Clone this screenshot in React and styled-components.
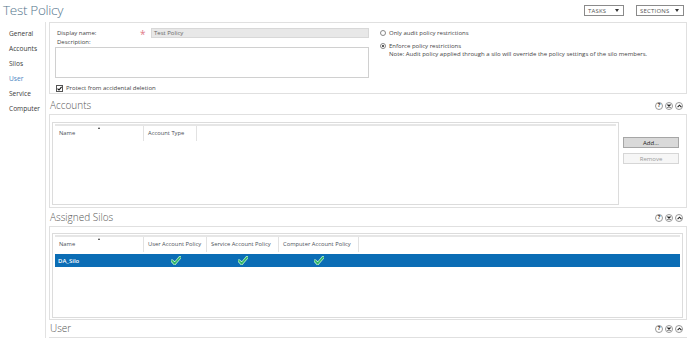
import React from "react";
import styled, { createGlobalStyle } from "styled-components";

const Global = createGlobalStyle`
  html, body { margin: 0; padding: 0; background: #fff; }
  body { font-family: "Open Sans", "Noto Sans", sans-serif; color: #444; }
`;

const Page = styled.div`
  width: 690px;
  height: 338px;
  overflow: hidden;
  display: flex;
  flex-direction: column;
  background: #fff;
`;

const TopBar = styled.div`
  height: 22px;
  display: flex;
  align-items: center;
  justify-content: space-between;
  padding: 0 6px 0 3px;
  box-sizing: border-box;
`;

const Title = styled.div`
  font-family: "Open Sans", "Noto Sans", sans-serif;
  font-weight: 300;
  font-size: 13.5px;
  color: #55768d;
  letter-spacing: -0.3px;
  line-height: 18px;
  margin-top: -2px;
`;

const Actions = styled.div`
  display: flex;
  gap: 12px;
  align-self: flex-start;
  margin-top: 5px;
`;

const DropButton = styled.div`
  width: ${(p) => p.$w}px;
  height: 11px;
  box-sizing: border-box;
  border: 1px solid #8a8a8a;
  background: #fff;
  display: flex;
  align-items: center;
  justify-content: space-between;
  padding: 0 4px 0 3px;
  font-size: 6px;
  color: #555;
  letter-spacing: 0.2px;
`;

const Tri = styled.span`
  width: 0;
  height: 0;
  border-left: 2.5px solid transparent;
  border-right: 2.5px solid transparent;
  border-top: 3px solid #333;
`;

const Body = styled.div`
  flex: 1;
  display: flex;
  gap: 3px;
  min-height: 0;
`;

const Nav = styled.div`
  width: 46px;
  border-right: 1px solid #e2e2e2;
  padding: 4px 0 0 9px;
  box-sizing: border-box;
  display: flex;
  flex-direction: column;
`;

const NavItem = styled.div`
  height: 15px;
  line-height: 15px;
  font-size: 6.6px;
  color: ${(p) => (p.$active ? "#4a86bf" : "#3a3a3a")};
`;

const Main = styled.div`
  width: 638px;
  display: flex;
  flex-direction: column;
`;

const GeneralPanel = styled.div`
  height: 74px;
  box-sizing: border-box;
  border: 1px solid #e0e0e0;
  display: flex;
  padding: 4px 6px 0 5px;
`;

const FieldCol = styled.div`
  width: 314px;
  display: flex;
  flex-direction: column;
`;

const Label = styled.span`
  font-size: 6px;
  color: #444;
`;

const NameRow = styled.div`
  display: flex;
  align-items: center;
  height: 11px;
  padding-left: 2px;
`;

const NameLabel = styled(Label)`
  width: 83px;
`;

const Required = styled.span`
  width: 11px;
  color: #e07a88;
  font-size: 10px;
  line-height: 10px;
  margin-top: 3px;
`;

const TextInput = styled.div`
  flex: 1;
  height: 10px;
  box-sizing: border-box;
  background: #e8e8e8;
  border: 1px solid #d8d8d8;
  font-size: 6px;
  color: #666;
  line-height: 8px;
  padding-left: 2px;
`;

const DescLabel = styled(Label)`
  padding-left: 2px;
  height: 9px;
  line-height: 9px;
`;

const TextArea = styled.div`
  height: 31px;
  box-sizing: border-box;
  border: 1px solid #d0d0d0;
  background: #fff;
`;

const CheckRow = styled.div`
  display: flex;
  align-items: center;
  gap: 3px;
  margin-top: 6px;
  padding-left: 1px;
`;

const CheckBox = styled.div`
  width: 7px;
  height: 7px;
  box-sizing: border-box;
  border: 1px solid #555;
  background: #fff;
  display: flex;
  align-items: center;
  justify-content: center;
`;

const RadioCol = styled.div`
  margin-left: 11px;
  padding-top: 1px;
  display: flex;
  flex-direction: column;
`;

const RadioRow = styled.div`
  display: flex;
  align-items: center;
  gap: 3px;
  height: 9px;
  margin-bottom: ${(p) => p.$mb || 0}px;
`;

const Radio = styled.div`
  width: 6px;
  height: 6px;
  box-sizing: border-box;
  border: 1px solid #888;
  border-radius: 50%;
  background: #fff;
  display: flex;
  align-items: center;
  justify-content: center;
  &::after {
    content: "";
    display: ${(p) => (p.$on ? "block" : "none")};
    width: 2px;
    height: 2px;
    border-radius: 50%;
    background: #222;
  }
`;

const Note = styled(Label)`
  padding-left: 9px;
  line-height: 9px;
`;

const SectionHeader = styled.div`
  height: ${(p) => p.$h}px;
  display: flex;
  align-items: flex-end;
  justify-content: space-between;
  padding: 0 4px 3px 1px;
  box-sizing: border-box;
  border-bottom: 1px solid #e0e0e0;
  flex-shrink: 0;
`;

const SectionTitle = styled.div`
  font-family: "Open Sans", "Noto Sans", sans-serif;
  font-weight: 300;
  font-size: 10px;
  color: #555;
  line-height: 12px;
`;

const IconGroup = styled.div`
  display: flex;
  gap: 2px;
  margin-bottom: 1px;
`;

const RoundIcon = styled.span`
  width: 8px;
  height: 8px;
  box-sizing: border-box;
  border: 1px solid #999;
  border-radius: 50%;
  background: #fff;
  display: flex;
  align-items: center;
  justify-content: center;
  font-size: 5.5px;
  font-weight: 700;
  line-height: 1;
  color: #333;
`;

const SectionPanel = styled.div`
  height: ${(p) => p.$h}px;
  box-sizing: border-box;
  border-left: 1px solid #e0e0e0;
  border-right: 1px solid #e0e0e0;
  border-bottom: 1px solid #e0e0e0;
  display: flex;
  gap: 4px;
  padding: ${(p) => p.$pt}px 3px 0 2px;
  flex-shrink: 0;
`;

const ListBox = styled.div`
  width: ${(p) => p.$w}px;
  height: ${(p) => p.$lh}px;
  box-sizing: border-box;
  border: 1px solid #dcdcdc;
  background: #fff;
  padding: 1px 2px;
  display: flex;
  flex-direction: column;
`;

const HeaderRow = styled.div`
  height: 17px;
  display: flex;
  border-top: 2px solid #e6e6e6;
  box-sizing: border-box;
`;

const ColHead = styled.div`
  position: relative;
  width: ${(p) => p.$w}px;
  box-sizing: border-box;
  padding: 3px 0 0 4px;
  font-size: 5.8px;
  color: #4a4f58;
  border-right: ${(p) => (p.$sep ? "1px solid #e2e2e2" : "none")};
`;

const SortArrow = styled.span`
  position: absolute;
  left: 43px;
  top: 1px;
  width: 0;
  height: 0;
  border-left: 1.5px solid transparent;
  border-right: 1.5px solid transparent;
  border-bottom: 2px solid #333;
`;

const DataRow = styled.div`
  height: 13px;
  display: flex;
  align-items: center;
  background: ${(p) => (p.$sel ? "#0b6db5" : "transparent")};
  margin-top: 2px;
`;

const Cell = styled.div`
  width: ${(p) => p.$w}px;
  box-sizing: border-box;
  padding-left: ${(p) => p.$pl ?? 3}px;
  font-size: 6px;
  color: #fff;
  font-weight: 600;
  display: flex;
  justify-content: ${(p) => (p.$center ? "center" : "flex-start")};
`;

const ButtonCol = styled.div`
  display: flex;
  flex-direction: column;
  gap: 5px;
  padding-top: 15px;
`;

const PanelButton = styled.div`
  width: 56px;
  height: 11px;
  box-sizing: border-box;
  border: 1px solid ${(p) => (p.$disabled ? "#d6d6d6" : "#a6a6a6")};
  background: ${(p) => (p.$disabled ? "#f6f6f6" : "#d9d9d9")};
  color: ${(p) => (p.$disabled ? "#9a9a9a" : "#222")};
  font-size: 6px;
  display: flex;
  align-items: center;
  justify-content: center;
`;

const Check = () => (
  <svg width="10" height="9" viewBox="0 0 10 9">
    <path d="M1 4.8 L3.7 7.6 L9 1.4" fill="none" stroke="#bdf0cf" strokeWidth="3" strokeLinecap="round" strokeLinejoin="round" />
    <path d="M1 4.8 L3.7 7.6 L9 1.4" fill="none" stroke="#2fb46a" strokeWidth="1.6" strokeLinecap="round" strokeLinejoin="round" />
  </svg>
);

const Icons = () => (
  <IconGroup>
    <RoundIcon>?</RoundIcon>
    <RoundIcon>
      <svg width="4" height="4" viewBox="0 0 4 4">
        <path d="M0.5 0.5 L3.5 3.5 M3.5 0.5 L0.5 3.5" fill="none" stroke="#222" strokeWidth="1.2" />
      </svg>
    </RoundIcon>
    <RoundIcon>
      <svg width="5" height="4" viewBox="0 0 5 4">
        <path d="M0.6 3.2 L2.5 1.2 L4.4 3.2" fill="none" stroke="#222" strokeWidth="1.1" />
      </svg>
    </RoundIcon>
  </IconGroup>
);

const navItems = ["General", "Accounts", "Silos", "User", "Service", "Computer"];

export default function App() {
  return (
    <Page>
      <Global />
      <TopBar>
        <Title>Test Policy</Title>
        <Actions>
          <DropButton $w={40}>TASKS<Tri /></DropButton>
          <DropButton $w={48}>SECTIONS<Tri /></DropButton>
        </Actions>
      </TopBar>
      <Body>
        <Nav>
          {navItems.map((n) => (
            <NavItem key={n} $active={n === "User"}>{n}</NavItem>
          ))}
        </Nav>
        <Main>
          <GeneralPanel>
            <FieldCol>
              <NameRow>
                <NameLabel>Display name:</NameLabel>
                <Required>*</Required>
                <TextInput>Test Policy</TextInput>
              </NameRow>
              <DescLabel>Description:</DescLabel>
              <TextArea />
              <CheckRow>
                <CheckBox>
                  <svg width="5" height="5" viewBox="0 0 5 5">
                    <path d="M0.5 2.6 L2 4 L4.6 0.8" fill="none" stroke="#111" strokeWidth="1.1" />
                  </svg>
                </CheckBox>
                <Label>Protect from accidental deletion</Label>
              </CheckRow>
            </FieldCol>
            <RadioCol>
              <RadioRow $mb={4}>
                <Radio />
                <Label>Only audit policy restrictions</Label>
              </RadioRow>
              <RadioRow>
                <Radio $on />
                <Label>Enforce policy restrictions</Label>
              </RadioRow>
              <Note>Note: Audit policy applied through a silo will override the policy settings of the silo members.</Note>
            </RadioCol>
          </GeneralPanel>

          <SectionHeader $h={21}>
            <SectionTitle>Accounts</SectionTitle>
            <Icons />
          </SectionHeader>
          <SectionPanel $h={93} $pt={7}>
            <ListBox $w={567} $lh={83}>
              <HeaderRow>
                <ColHead $w={89} $sep>Name<SortArrow /></ColHead>
                <ColHead $w={53} $sep>Account Type</ColHead>
              </HeaderRow>
            </ListBox>
            <ButtonCol>
              <PanelButton>Add...</PanelButton>
              <PanelButton $disabled>Remove</PanelButton>
            </ButtonCol>
          </SectionPanel>

          <SectionHeader $h={19}>
            <SectionTitle>Assigned Silos</SectionTitle>
            <Icons />
          </SectionHeader>
          <SectionPanel $h={93} $pt={6}>
            <ListBox $w={632} $lh={85}>
              <HeaderRow>
                <ColHead $w={89} $sep>Name<SortArrow /></ColHead>
                <ColHead $w={63} $sep>User Account Policy</ColHead>
                <ColHead $w={72} $sep>Service Account Policy</ColHead>
                <ColHead $w={80} $sep>Computer Account Policy</ColHead>
              </HeaderRow>
              <DataRow $sel>
                <Cell $w={89}>DA_Silo</Cell>
                <Cell $w={63} $center $pl={0}><Check /></Cell>
                <Cell $w={72} $center $pl={0}><Check /></Cell>
                <Cell $w={80} $center $pl={0}><Check /></Cell>
              </DataRow>
            </ListBox>
          </SectionPanel>

          <SectionHeader $h={18}>
            <SectionTitle>User</SectionTitle>
            <Icons />
          </SectionHeader>
        </Main>
      </Body>
    </Page>
  );
}
